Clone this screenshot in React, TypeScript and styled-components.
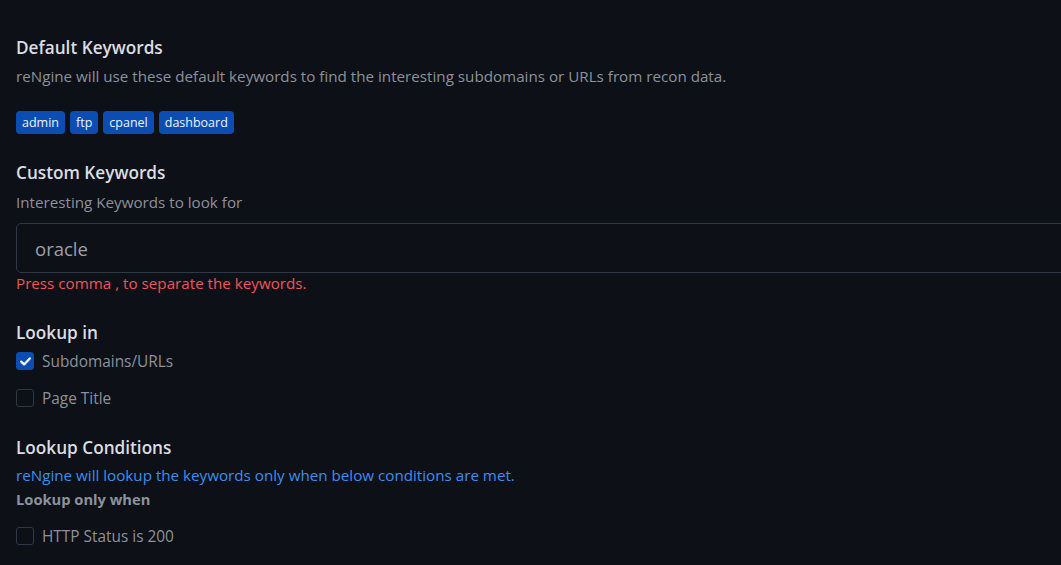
import React, { ReactElement } from 'react'
import styled, { createGlobalStyle } from 'styled-components'

const GlobalStyle = createGlobalStyle`
  html, body {
    margin: 0;
    padding: 0;
    background: #0d1017;
    overflow: hidden;
  }
  * {
    box-sizing: border-box;
  }
`

const Page = styled.div(() => ({
  width: 1100,
  padding: '36px 16px 0 16px',
  fontFamily: '"Open Sans", Lato, sans-serif',
  color: '#8c929b',
  fontSize: 15,
}))

const Section = styled.section(() => ({
  display: 'block',
}))

const Heading = styled.h4<{ offset?: number }>(({ offset = 0 }) => ({
  margin: `${offset}px 0 0 0`,
  fontSize: 17.2,
  fontWeight: 600,
  lineHeight: '24px',
  color: '#dadde2',
}))

const Hint = styled.p<{ tone?: 'muted' | 'info' | 'danger'; offset?: number }>(
  ({ tone = 'muted', offset = 0 }) => ({
    margin: `${offset}px 0 0 0`,
    fontSize: 15.2,
    lineHeight: '20px',
    color: tone === 'info' ? '#3a8ef0' : tone === 'danger' ? '#ef5558' : '#8c929b',
  }),
)

const BadgeRow = styled.div(() => ({
  display: 'flex',
  gap: 5,
  marginTop: 25,
}))

const Badge = styled.span(() => ({
  display: 'inline-flex',
  alignItems: 'center',
  height: 23,
  padding: '0 6px',
  borderRadius: 4,
  background: '#0b4db3',
  color: '#eef3fb',
  fontSize: 12.5,
  fontWeight: 500,
}))

const Input = styled.input(() => ({
  display: 'block',
  width: '100%',
  height: 50,
  marginTop: 11,
  padding: '0 18px',
  background: 'transparent',
  border: '1px solid #2d3849',
  borderRadius: 5,
  color: '#9aa0a8',
  fontFamily: 'inherit',
  fontSize: 18.5,
  outline: 'none',
}))

const CheckList = styled.div<{ offset?: number }>(({ offset = 6 }) => ({
  display: 'flex',
  flexDirection: 'column',
  gap: 17,
  marginTop: offset,
}))

const CheckRow = styled.label(() => ({
  display: 'flex',
  alignItems: 'center',
  gap: 8,
  height: 20,
  fontSize: 15.4,
  color: '#8c929b',
}))

const Box = styled.span<{ checked: boolean }>(({ checked }) => ({
  display: 'inline-flex',
  flexShrink: 0,
  alignItems: 'center',
  justifyContent: 'center',
  width: 18,
  height: 18,
  borderRadius: 3,
  background: checked ? '#0b4db3' : 'transparent',
  border: checked ? '1px solid #0b4db3' : '1px solid #2d3849',
}))

const Strong = styled.p(() => ({
  margin: '4px 0 0 0',
  fontSize: 14.7,
  fontWeight: 700,
  lineHeight: '20px',
  color: '#8c929b',
}))

interface CheckboxProps {
  checked?: boolean
  label: string
}

const Checkbox = ({ checked = false, label }: CheckboxProps): ReactElement => (
  <CheckRow>
    <Box checked={checked}>
      {checked && (
        <svg width="11" height="9" viewBox="0 0 11 9">
          <path d="M1.2 4.6 L4.1 7.4 L9.8 1.4" fill="none" stroke="#fff" strokeWidth="2.2" strokeLinecap="round" strokeLinejoin="round" />
        </svg>
      )}
    </Box>
    {label}
  </CheckRow>
)

export default function App(): ReactElement {
  return (
    <>
      <GlobalStyle />
      <Page>
        <Section>
          <Heading>Default Keywords</Heading>
          <Hint offset={6}>
            reNgine will use these default keywords to find the interesting subdomains or URLs from recon data.
          </Hint>
          <BadgeRow>
            {['admin', 'ftp', 'cpanel', 'dashboard'].map((k) => (
              <Badge key={k}>{k}</Badge>
            ))}
          </BadgeRow>
        </Section>

        <Section>
          <Heading offset={27}>Custom Keywords</Heading>
          <Hint offset={7}>Interesting Keywords to look for</Hint>
          <Input defaultValue="oracle" />
          <Hint tone="danger">Press comma , to separate the keywords.</Hint>
        </Section>

        <Section>
          <Heading offset={28}>Lookup in</Heading>
          <CheckList>
            <Checkbox checked label="Subdomains/URLs" />
            <Checkbox label="Page Title" />
          </CheckList>
        </Section>

        <Section>
          <Heading offset={28}>Lookup Conditions</Heading>
          <Hint tone="info" offset={5}>
            reNgine will lookup the keywords only when below conditions are met.
          </Hint>
          <Strong>Lookup only when</Strong>
          <CheckList offset={17}>
            <Checkbox label="HTTP Status is 200" />
          </CheckList>
        </Section>
      </Page>
    </>
  )
}
